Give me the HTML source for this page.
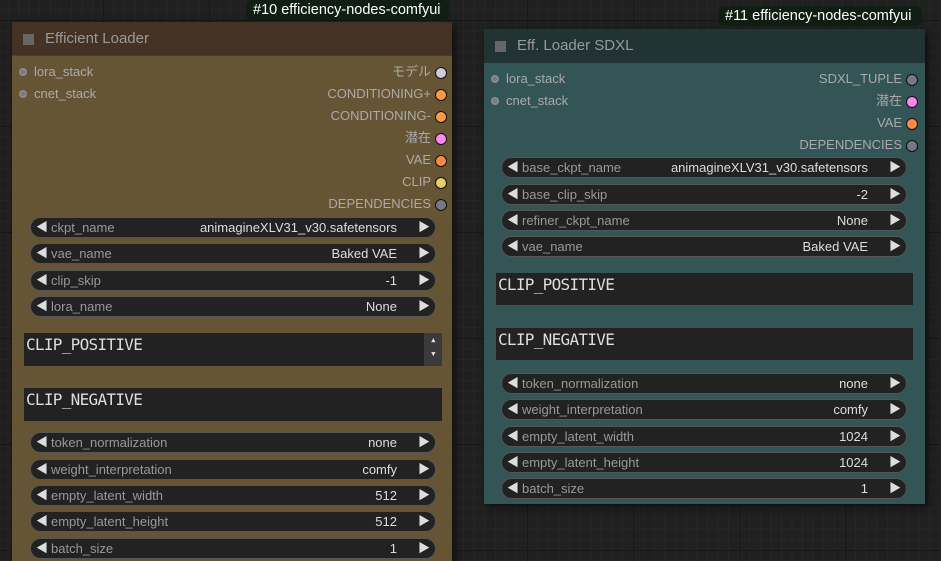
<!DOCTYPE html>
<html style="width:941px;height:561px;overflow:hidden"><head><meta charset="utf-8"><style>
*{box-sizing:border-box;margin:0;padding:0}
body{width:941px;height:561px;overflow:hidden;background-color:#202020;
background-image:linear-gradient(#181818 1px,transparent 1px),linear-gradient(90deg,#181818 1px,transparent 1px),linear-gradient(#262626 1px,transparent 1px),linear-gradient(90deg,#262626 1px,transparent 1px);
background-size:106px 106px,106px 106px,10.6px 10.6px,10.6px 10.6px;background-position:-3px 20px;
font-family:"Liberation Sans","Noto Sans CJK JP",sans-serif;font-size:13px;position:relative}
.a{position:absolute}
.node{position:absolute;box-shadow:3px 3px 8px rgba(0,0,0,.6)}
.title{position:absolute;left:0;right:0;top:0;height:34px;color:#999;font-size:15px;line-height:34px;padding-left:33px}
.title:before{content:"";position:absolute;left:11px;top:12px;width:11px;height:11px;background:#666}
.badge{position:absolute;background:#0f1f14;color:#fff;font-size:14.5px;border-radius:6px;height:20px;line-height:20px;padding:0 7px;white-space:nowrap}
.in,.out{position:absolute;color:#aaa;line-height:16px;white-space:nowrap}
.in{padding-left:16px}
.in:before{content:"";position:absolute;left:1px;top:4px;width:8px;height:8px;border-radius:50%;background:#778;box-shadow:inset 0 0 0 2px #888;}
.out{text-align:right;padding-right:16px}
.out:after{content:"";position:absolute;right:0;top:3px;width:10px;height:10px;border-radius:50%;border:1px solid #111;background:var(--c)}
.w{position:absolute;height:21px;background:#222;border:1px solid #555;border-radius:11px;color:#999;line-height:19px;padding-left:20px}
.w:before{content:"◀";position:absolute;left:5px;color:#ddd;font-size:12px}
.w:after{content:"▶";position:absolute;right:5px;color:#ddd;font-size:12px}
.w b{position:absolute;right:38px;top:0;color:#ddd;font-weight:normal}
.ta{position:absolute;background:#222;color:#ddd;font-family:"DejaVu Sans Mono","Liberation Mono",monospace;font-size:16px;padding:2px 2px;letter-spacing:-0.7px}
</style></head><body>

<div class="badge" style="left:246px;top:0;width:203px">#10 efficiency-nodes-comfyui</div>
<div class="node" style="left:12px;top:22px;width:440px;height:560px;background:#665535">
 <div class="title" style="background:#443324;border-bottom:1px dotted #554433">Efficient Loader</div>
</div>
<div class="in a" style="left:18px;top:64px">lora_stack</div>
<div class="in a" style="left:18px;top:86px">cnet_stack</div>
<div class="out" style="right:494px;top:64px;--c:#ccd">モデル</div>
<div class="out" style="right:494px;top:86px;--c:#f94">CONDITIONING+</div>
<div class="out" style="right:494px;top:108px;--c:#f94">CONDITIONING-</div>
<div class="out" style="right:494px;top:130px;--c:#f8e">潜在</div>
<div class="out" style="right:494px;top:152px;--c:#f84">VAE</div>
<div class="out" style="right:494px;top:174px;--c:#ec6">CLIP</div>
<div class="out" style="right:494px;top:196px;--c:#778">DEPENDENCIES</div>

<div class="w" style="left:30px;top:217px;width:406px">ckpt_name<b>animagineXLV31_v30.safetensors</b></div>
<div class="w" style="left:30px;top:243px;width:406px">vae_name<b>Baked VAE</b></div>
<div class="w" style="left:30px;top:270px;width:406px">clip_skip<b>-1</b></div>
<div class="w" style="left:30px;top:296px;width:406px">lora_name<b>None</b></div>
<div class="ta" style="left:24px;top:333px;width:418px;height:33px">CLIP_POSITIVE
 <div class="a" style="right:0;top:0;width:18px;height:33px;background:#3a3a3a;color:#ddd;font-size:11px;text-align:center;line-height:14px">▴<br>▾</div></div>
<div class="ta" style="left:24px;top:388px;width:418px;height:33px">CLIP_NEGATIVE</div>
<div class="w" style="left:30px;top:432px;width:406px">token_normalization<b>none</b></div>
<div class="w" style="left:30px;top:459px;width:406px">weight_interpretation<b>comfy</b></div>
<div class="w" style="left:30px;top:485px;width:406px">empty_latent_width<b>512</b></div>
<div class="w" style="left:30px;top:511px;width:406px">empty_latent_height<b>512</b></div>
<div class="w" style="left:30px;top:538px;width:406px">batch_size<b>1</b></div>

<div class="badge" style="left:718px;top:6px;width:204px">#11 efficiency-nodes-comfyui</div>
<div class="node" style="left:484px;top:29px;width:441px;height:475px;background:#335555">
 <div class="title" style="background:#223333">Eff. Loader SDXL</div>
</div>
<div class="in a" style="left:490px;top:71px">lora_stack</div>
<div class="in a" style="left:490px;top:93px">cnet_stack</div>
<div class="out" style="right:23px;top:71px;--c:#778">SDXL_TUPLE</div>
<div class="out" style="right:23px;top:93px;--c:#f8e">潜在</div>
<div class="out" style="right:23px;top:115px;--c:#f84">VAE</div>
<div class="out" style="right:23px;top:137px;--c:#778">DEPENDENCIES</div>

<div class="w" style="left:501px;top:157px;width:406px">base_ckpt_name<b>animagineXLV31_v30.safetensors</b></div>
<div class="w" style="left:501px;top:184px;width:406px">base_clip_skip<b>-2</b></div>
<div class="w" style="left:501px;top:210px;width:406px">refiner_ckpt_name<b>None</b></div>
<div class="w" style="left:501px;top:236px;width:406px">vae_name<b>Baked VAE</b></div>
<div class="ta" style="left:496px;top:273px;width:417px;height:32px">CLIP_POSITIVE</div>
<div class="ta" style="left:496px;top:328px;width:417px;height:32px">CLIP_NEGATIVE</div>
<div class="w" style="left:501px;top:373px;width:406px">token_normalization<b>none</b></div>
<div class="w" style="left:501px;top:399px;width:406px">weight_interpretation<b>comfy</b></div>
<div class="w" style="left:501px;top:426px;width:406px">empty_latent_width<b>1024</b></div>
<div class="w" style="left:501px;top:452px;width:406px">empty_latent_height<b>1024</b></div>
<div class="w" style="left:501px;top:478px;width:406px">batch_size<b>1</b></div>
</body></html>
